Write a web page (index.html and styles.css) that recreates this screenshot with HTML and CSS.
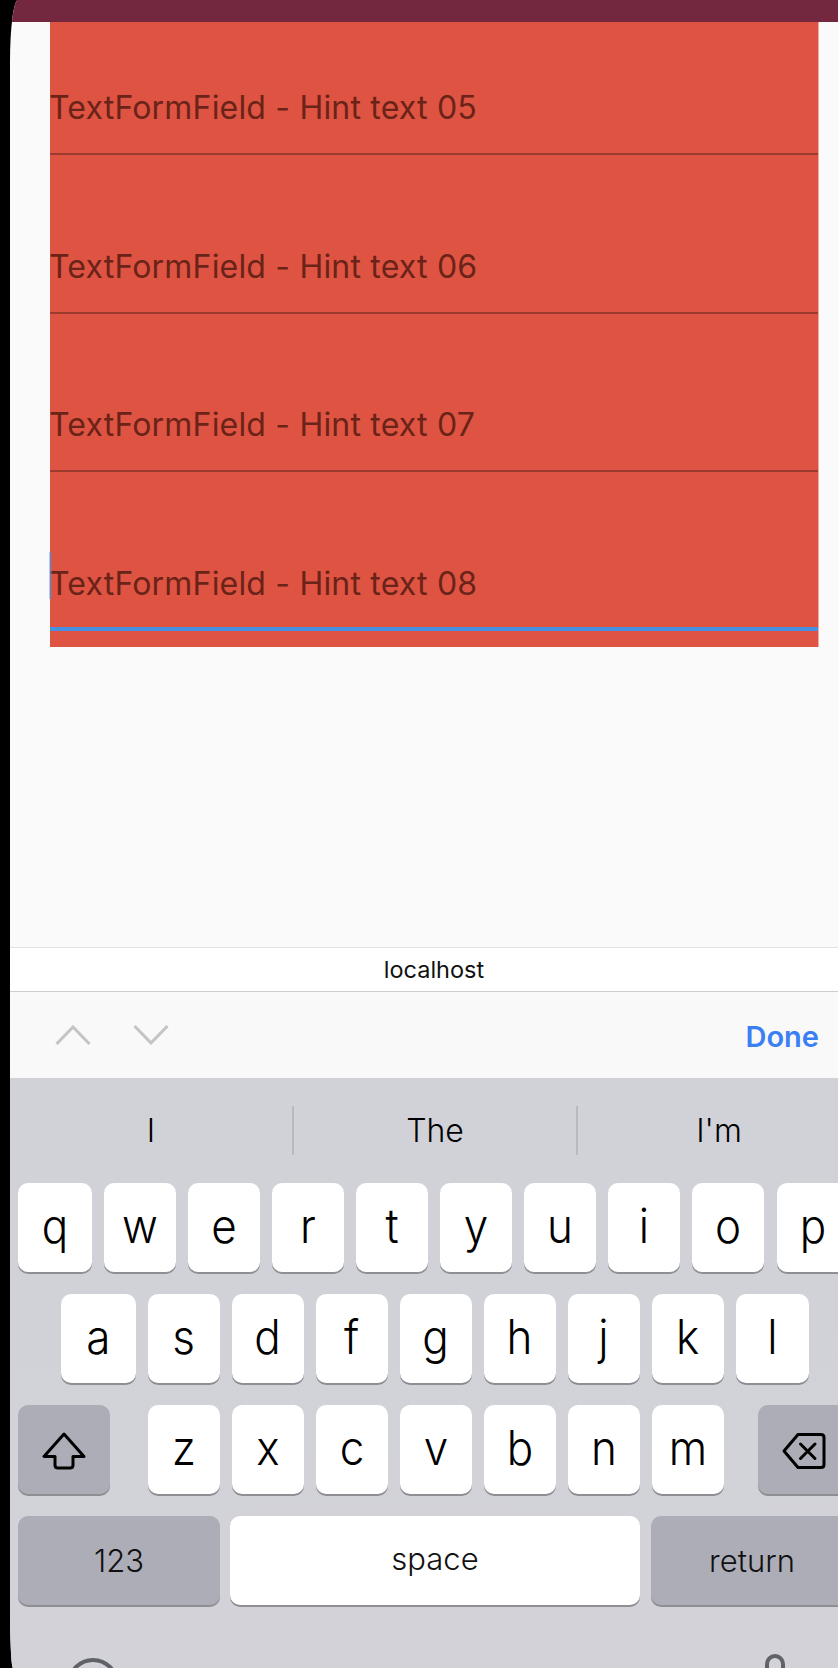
FILE: index.html
```html
<!DOCTYPE html>
<html lang="en">

<head>
    <meta charset="UTF-8" />
    <meta name="viewport" content="width=device-width, initial-scale=1.0" />
    <title>Document</title>
    <link rel="stylesheet" href="styles.css">
</head>

<body>
    <div class="screen">
        <div class="topbar"></div>

        <div class="content">
            <div class="panel">
                <div class="field field-first"><span class="hint">TextFormField - Hint text 05</span></div>
                <div class="field"><span class="hint">TextFormField - Hint text 06</span></div>
                <div class="field"><span class="hint">TextFormField - Hint text 07</span></div>
                <div class="field field-focus">
                    <span class="caret"></span>
                    <span class="hint">TextFormField - Hint text 08</span>
                </div>
            </div>
        </div>

        <div class="address">localhost</div>

        <div class="toolbar">
            <svg class="chevron" width="36" height="20" viewBox="0 0 36 20">
                <path d="M1.5 19 18 2l16.500 17" />
            </svg>
            <svg class="chevron" width="36" height="20" viewBox="0 0 36 20">
                <path d="M1.500 1 18 18 34.500 1" />
            </svg>
            <span class="done">Done</span>
        </div>

        <div class="keyboard">
            <div class="suggestions">
                <div class="suggestion">I</div>
                <div class="suggestion">The</div>
                <div class="suggestion">I'm</div>
            </div>

            <div class="row">
                <div class="key key-first"><span>q</span></div>
                <div class="key"><span>w</span></div>
                <div class="key"><span>e</span></div>
                <div class="key"><span>r</span></div>
                <div class="key"><span>t</span></div>
                <div class="key"><span>y</span></div>
                <div class="key"><span>u</span></div>
                <div class="key"><span>i</span></div>
                <div class="key"><span>o</span></div>
                <div class="key key-last"><span>p</span></div>
            </div>

            <div class="row row-home">
                <div class="key key-first"><span>a</span></div>
                <div class="key"><span>s</span></div>
                <div class="key"><span>d</span></div>
                <div class="key"><span>f</span></div>
                <div class="key"><span>g</span></div>
                <div class="key"><span>h</span></div>
                <div class="key"><span>j</span></div>
                <div class="key"><span>k</span></div>
                <div class="key key-last"><span>l</span></div>
            </div>

            <div class="row">
                <div class="key key-dark key-shift">
                    <svg width="44" height="38" viewBox="0 0 44 38">
                        <path class="glyph" d="M22 2 2 24.500h11v8.500q0 3 3 3h12q3 0 3-3V24.500h11z" />
                    </svg>
                </div>
                <div class="key key-z"><span>z</span></div>
                <div class="key"><span>x</span></div>
                <div class="key"><span>c</span></div>
                <div class="key"><span>v</span></div>
                <div class="key"><span>b</span></div>
                <div class="key"><span>n</span></div>
                <div class="key"><span>m</span></div>
                <div class="key key-dark key-delete">
                    <svg width="44" height="38" viewBox="0 0 44 38">
                        <path class="glyph" d="M16 2.500h23q3 0 3 3v27q0 3-3 3H16L2 19z" />
                        <path class="glyph" d="M18.500 12 33 26.500M33 12 18.500 26.500" />
                    </svg>
                </div>
            </div>

            <div class="row">
                <div class="key key-dark key-numbers"><span class="word">123</span></div>
                <div class="key key-space"><span class="word">space</span></div>
                <div class="key key-dark key-return"><span class="word">return</span></div>
            </div>

            <div class="bottom">
                <svg class="globe" width="52" height="10" viewBox="0 0 52 10">
                    <circle cx="26" cy="26" r="24" />
                </svg>
                <svg class="mic" width="20" height="14" viewBox="0 0 20 14">
                    <path d="M2 14V10a8 8 0 0 1 16 0v4" />
                </svg>
            </div>
        </div>
    </div>
</body>

</html>
```
FILE: styles.css
```css
* {
    margin: 0;
    padding: 0;
    box-sizing: border-box;
}

body {
    width: 838px;
    height: 1668px;
    overflow: hidden;
    background: #000;
    font-family: "Inter", "Liberation Sans", sans-serif;
}

.screen {
    display: flex;
    flex-direction: column;
    width: 828px;
    height: 1668px;
    margin-left: 10px;
    overflow: hidden;
    background: #fafafa;
    border-radius: 8px 0 0 3px / 62px 0 0 60px;
}

.topbar {
    flex: none;
    height: 22px;
    background: #732840;
}

.content {
    flex: 1;
    padding-left: 40px;
}

.panel {
    width: 769px;
    height: 625px;
    background: #df5342;
    border-right: 1px solid #f0a89f;
}

.field {
    position: relative;
    display: flex;
    align-items: flex-end;
    height: 158.500px;
    padding-bottom: 23px;
    border-bottom: 2px solid #9a3b2e;
}

.field-first {
    height: 133px;
}

.field-focus {
    border-bottom: 4px solid #4a90e2;
    padding-bottom: 21px;
}

.hint {
    margin-left: -1px;
    font-size: 32px;
    font-weight: 400;
    line-height: 44px;
    letter-spacing: 0.19px;
    color: #6a2318;
}

.caret {
    position: absolute;
    left: -1px;
    top: 80px;
    width: 3px;
    height: 47px;
    background: rgba(74, 144, 226, .45);
}

.address {
    flex: none;
    height: 45px;
    padding-left: 20px;
    background: #fff;
    border-top: 1px solid #e2e2e2;
    border-bottom: 1px solid #cdcdcd;
    text-align: center;
    font-size: 23.500px;
    line-height: 43px;
    color: #111;
}

.toolbar {
    flex: none;
    display: flex;
    align-items: center;
    gap: 42px;
    height: 86px;
    padding: 0 19px 0 45px;
    background: #f9f9f9;
}

.chevron {
    fill: none;
    stroke: #c4c4c4;
    stroke-width: 3;
}

.done {
    margin-left: auto;
    padding-top: 2px;
    font-size: 29px;
    font-weight: 600;
    color: #3b7ff5;
}

.keyboard {
    flex: none;
    height: 590px;
    padding-left: 8px;
    background: linear-gradient(#d0d2d8, #d3d2d9);
}

.suggestions {
    display: flex;
    align-items: center;
    height: 105px;
    margin-left: -8px;
}

.suggestion {
    flex: none;
    width: 284px;
    height: 49px;
    text-align: center;
    font-size: 32px;
    font-weight: 350;
    line-height: 49px;
    color: #000;
    border-left: 2px solid #b9b9bf;
}

.suggestion:first-child {
    width: 282px;
    border-left: none;
}

.row {
    display: flex;
    gap: 12px;
    height: 89px;
    margin-bottom: 22px;
}

.row-home {
    padding-left: 43px;
}

.key {
    flex: none;
    display: flex;
    justify-content: center;
    align-items: center;
    width: 72px;
    padding-bottom: 4px;
    background: #fff;
    border-radius: 10px;
    box-shadow: 0 2px 0 #8e8e93;
    font-size: 44px;
    font-weight: 300;
    color: #000;
}

.key span {
    transform: scaleY(1.08);
}

.key-first {
    width: 74px;
}

.row-home .key-first {
    width: 74.500px;
}

.key-last {
    width: 73px;
    margin-left: 0.500px;
}

.key-dark {
    background: #adadb8;
}

.key-shift,
.key-delete {
    width: 92px;
    padding: 2px 0 0;
}

.key-z {
    margin-left: 26px;
}

.key-delete {
    margin-left: 22px;
}

.key-numbers {
    width: 202px;
    padding-bottom: 0;
}

.key-space {
    width: 410px;
    margin-left: -2px;
}

.key-return {
    width: 202px;
    margin-left: -1px;
    padding-bottom: 0;
}

.key .word {
    transform: none;
    font-size: 31px;
    font-weight: 350;
    color: #111;
}

.glyph {
    fill: none;
    stroke: #000;
    stroke-width: 3;
    stroke-linejoin: round;
    stroke-linecap: round;
}

.bottom {
    display: flex;
    align-items: flex-end;
    justify-content: space-between;
    height: 63px;
    margin-top: -22px;
    padding: 0 53px 0 49px;
}

.globe,
.mic {
    flex: none;
    fill: none;
    stroke: #5f6268;
    stroke-width: 4;
}
```
